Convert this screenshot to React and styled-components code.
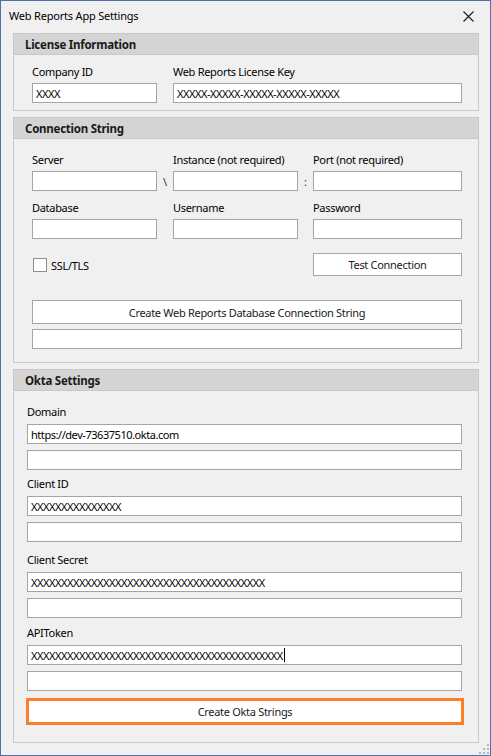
import React from "react";
import styled, { createGlobalStyle } from "styled-components";

const Global = createGlobalStyle`
  html, body { margin: 0; padding: 0; background: #f0f0f0; }
  body { font-family: "Noto Sans", "Open Sans", sans-serif; font-size: 11px; color: #000; }
  * { box-sizing: border-box; }
`;

const Window = styled.div`
  position: relative;
  width: 491px;
  height: 756px;
  border: 1px solid #4f71a8;
  background: #f0f0f0;
  display: flex;
  flex-direction: column;
  overflow: hidden;
`;

const TitleBar = styled.div`
  height: 32px;
  display: flex;
  align-items: center;
  justify-content: space-between;
  padding: 0 16px 3px 8px;
  font-size: 11px;
  letter-spacing: -0.2px;
  color: #000;
`;

const CloseIcon = styled.svg`
  width: 11px;
  height: 11px;
  margin-top: 2px;
`;

const Body = styled.div`
  display: flex;
  flex-direction: column;
  gap: 6px;
  padding: 0 11px 0 12px;
`;

const Panel = styled.section`
  border: 1px solid #c9c9c9;
  background: #f0f0f0;
  height: ${(p) => p.$h}px;
  display: flex;
  flex-direction: column;
`;

const PanelHeader = styled.div`
  height: 21px;
  background: #d4d4d4;
  border-bottom: 1px solid #c9c9c9;
  display: flex;
  align-items: center;
  padding-left: 11px;
  font-weight: 700;
  font-size: 11.5px;
  letter-spacing: -0.25px;
  color: #1a1a1a;
`;

const PanelBody = styled.div`
  padding: ${(p) => p.$pad};
  display: flex;
  flex-direction: column;
`;

const Grid = styled.div`
  display: grid;
  grid-template-columns: ${(p) => p.$cols};
  align-items: end;
  margin-top: ${(p) => p.$mt || 0}px;
`;

const Cell = styled.div`
  display: flex;
  flex-direction: column;
  gap: 3px;
  grid-column: ${(p) => p.$col || "auto"};
`;

const Label = styled.div`
  height: 17px;
  line-height: 17px;
  font-size: 11px;
  letter-spacing: -0.3px;
  color: #000;
  margin-top: ${(p) => p.$mt || 0}px;
  white-space: nowrap;
`;

const Input = styled.div`
  height: 20px;
  border: 1px solid #a5a5a5;
  background: #fff;
  display: flex;
  align-items: center;
  padding-left: 3px;
  font-size: 11px;
  letter-spacing: -0.45px;
  color: #000;
  white-space: nowrap;
  overflow: hidden;
  margin-top: ${(p) => p.$mt || 0}px;
`;

const Caret = styled.span`
  display: inline-block;
  width: 1px;
  height: 14px;
  background: #000;
  margin-left: 1px;
`;

const Sep = styled.div`
  height: 20px;
  display: flex;
  align-items: center;
  justify-content: center;
  font-size: 11px;
  color: #333;
`;

const Row = styled.div`
  display: flex;
  align-items: center;
  justify-content: space-between;
  margin-top: ${(p) => p.$mt || 0}px;
`;

const CheckRow = styled.label`
  display: flex;
  align-items: center;
  gap: 4px;
  font-size: 11px;
  letter-spacing: -0.3px;
  margin-left: 1px;
  margin-top: 1px;
`;

const Box = styled.span`
  width: 14px;
  height: 14px;
  border: 1px solid #8f8f8f;
  background: #fff;
`;

const Button = styled.div`
  height: ${(p) => p.$h || 23}px;
  width: ${(p) => (p.$w ? p.$w + "px" : "auto")};
  border: ${(p) => (p.$accent ? "3px solid #fd7f24" : "1px solid #a5a5a5")};
  background: #fff;
  display: flex;
  align-items: center;
  justify-content: center;
  font-size: 11px;
  letter-spacing: -0.3px;
  color: #1a1a1a;
  margin-top: ${(p) => p.$mt || 0}px;
  margin-left: ${(p) => p.$ml || 0}px;
  margin-right: ${(p) => p.$mr || 0}px;
`;

const Grip = styled.svg`
  position: absolute;
  right: 1px;
  bottom: 1px;
  width: 10px;
  height: 10px;
`;

function Field({ label, value, caret, lmt }) {
  return (
    <>
      <Label $mt={lmt}>{label}</Label>
      <Input $mt={4}>
        {value}
        {caret && <Caret />}
      </Input>
      <Input $mt={6} />
    </>
  );
}

export default function App() {
  return (
    <>
      <Global />
      <Window>
        <TitleBar>
          <span>Web Reports App Settings</span>
          <CloseIcon viewBox="0 0 11 11">
            <path d="M0.5 0.5 L10.5 10.5 M10.5 0.5 L0.5 10.5" stroke="#1a1a1a" strokeWidth="1.1" fill="none" />
          </CloseIcon>
        </TitleBar>
        <Body>
          <Panel $h={78}>
            <PanelHeader>License Information</PanelHeader>
            <PanelBody $pad="8px 16px 0 18px">
              <Grid $cols="125px 16px 289px">
                <Cell $col="1">
                  <Label>Company ID</Label>
                  <Input>XXXX</Input>
                </Cell>
                <Cell $col="3">
                  <Label>Web Reports License Key</Label>
                  <Input>XXXXX-XXXXX-XXXXX-XXXXX-XXXXX</Input>
                </Cell>
              </Grid>
            </PanelBody>
          </Panel>

          <Panel $h={246}>
            <PanelHeader>Connection String</PanelHeader>
            <PanelBody $pad="12px 16px 0 18px">
              <Grid $cols="125px 16px 125px 15px 149px">
                <Cell>
                  <Label>Server</Label>
                  <Input />
                </Cell>
                <Sep>\</Sep>
                <Cell>
                  <Label>Instance (not required)</Label>
                  <Input />
                </Cell>
                <Sep>:</Sep>
                <Cell>
                  <Label>Port (not required)</Label>
                  <Input />
                </Cell>
              </Grid>
              <Grid $cols="125px 16px 125px 15px 149px" $mt={8}>
                <Cell $col="1">
                  <Label>Database</Label>
                  <Input />
                </Cell>
                <Cell $col="3">
                  <Label>Username</Label>
                  <Input />
                </Cell>
                <Cell $col="5">
                  <Label>Password</Label>
                  <Input />
                </Cell>
              </Grid>
              <Row $mt={14}>
                <CheckRow>
                  <Box />
                  SSL/TLS
                </CheckRow>
                <Button $w={149} $h={23}>Test Connection</Button>
              </Row>
              <Button $h={24} $mt={24}>Create Web Reports Database Connection String</Button>
              <Input $mt={5} />
            </PanelBody>
          </Panel>

          <Panel $h={374}>
            <PanelHeader>Okta Settings</PanelHeader>
            <PanelBody $pad="12px 16px 0 13px">
              <Field label="Domain" value="https://dev-73637510.okta.com" />
              <Field label="Client ID" value="XXXXXXXXXXXXXXX" lmt={5} />
              <Field label="Client Secret" value="XXXXXXXXXXXXXXXXXXXXXXXXXXXXXXXXXXXXXXX" lmt={9} />
              <Field label="APIToken" value="XXXXXXXXXXXXXXXXXXXXXXXXXXXXXXXXXXXXXXXXXX" caret lmt={6} />
              <Button $accent $h={27} $mt={7} $ml={-1} $mr={-2}>Create Okta Strings</Button>
            </PanelBody>
          </Panel>
        </Body>
        <Grip viewBox="0 0 10 10">
          <rect x="8" y="0" width="2" height="2" fill="#b8b8b8" />
          <rect x="4" y="4" width="2" height="2" fill="#b8b8b8" />
          <rect x="8" y="4" width="2" height="2" fill="#b8b8b8" />
          <rect x="0" y="8" width="2" height="2" fill="#b8b8b8" />
          <rect x="4" y="8" width="2" height="2" fill="#b8b8b8" />
          <rect x="8" y="8" width="2" height="2" fill="#b8b8b8" />
        </Grip>
      </Window>
    </>
  );
}
